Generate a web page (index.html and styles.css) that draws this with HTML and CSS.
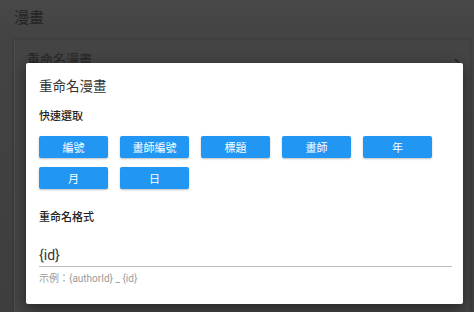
FILE: index.html
```html
<!DOCTYPE html>
<html lang="zh-Hant">
<head>
<meta charset="utf-8">
<title>重命名漫畫</title>
<link rel="stylesheet" href="styles.css">
</head>
<body>
<div class="page">
  <h1 class="page-title">漫畫</h1>
  <div class="card">
    <div class="card-row">
      <span>重命名漫畫</span>
      <svg class="chev" width="8" height="10" viewBox="0 0 8 10"><path d="M2 1 L6 5 L2 9" fill="none" stroke="#262626" stroke-width="1.6"/></svg>
    </div>
  </div>
</div>

<div class="dialog">
  <h2 class="dialog-title">重命名漫畫</h2>
  <div class="section-label">快速選取</div>
  <div class="chips">
    <button class="chip">編號</button>
    <button class="chip">畫師編號</button>
    <button class="chip">標題</button>
    <button class="chip">畫師</button>
    <button class="chip">年</button>
    <button class="chip">月</button>
    <button class="chip">日</button>
  </div>
  <div class="section-label format-label">重命名格式</div>
  <div class="field">{id}</div>
  <div class="hint">示例：{authorId} _ {id}</div>
</div>
</body>
</html>
```
FILE: styles.css
```css
* { box-sizing: border-box; }
html, body { margin: 0; padding: 0; }
body {
  width: 474px;
  height: 312px;
  overflow: hidden;
  background: #3b3b3b;
  font-family: Roboto, "Noto Sans CJK TC", sans-serif;
  position: relative;
}
.page {
  height: 312px;
  background: linear-gradient(#484848, #434343 40px, #3e3e3e 312px);
  padding: 9px 0 0 14px;
}
.page-title {
  margin: 0;
  font-size: 15px;
  line-height: 18px;
  font-weight: 400;
  color: #242424;
}
.card {
  margin-top: 13px;
  margin-right: 4px;
  height: 280px;
  background: #444;
  border-left: 1px solid #4d4d4d;
  box-shadow: 0 0 3px rgba(0,0,0,0.2);
}
.card-row {
  display: flex;
  align-items: center;
  justify-content: space-between;
  padding: 12px 9px 0 12px;
  font-size: 13px;
  line-height: 16px;
  color: #262626;
}
.chev { margin-top: 6px; }

.dialog {
  position: absolute;
  left: 26px;
  top: 63px;
  width: 437px;
  height: 241px;
  background: #fff;
  border-radius: 2px;
  box-shadow: 0 4px 14px rgba(0,0,0,0.45);
  padding: 14px 11px 0 13px;
}
.dialog-title {
  margin: 0;
  font-size: 13.5px;
  line-height: 18px;
  font-weight: 400;
  color: #333;
}
.section-label {
  margin-top: 15px;
  font-size: 11px;
  line-height: 14px;
  font-weight: 500;
  color: #222;
}
.chips {
  margin-top: 12px;
  display: grid;
  grid-template-columns: repeat(5, 69px);
  column-gap: 12px;
  row-gap: 9px;
}
.chip {
  height: 22px;
  border: none;
  border-radius: 2px;
  background: #2196f3;
  color: #fff;
  font-family: Roboto, "Noto Sans CJK TC", sans-serif;
  font-size: 11px;
  padding: 0;
  box-shadow: 0 1px 2px rgba(0,0,0,0.25);
}
.format-label { margin-top: 22px; }
.field {
  margin-top: 20px;
  font-size: 14px;
  line-height: 20px;
  padding-bottom: 1px;
  color: #333;
  border-bottom: 1px solid #bdbdbd;
}
.hint {
  margin-top: 5px;
  font-size: 10px;
  line-height: 13px;
  color: #9a9a9a;
}
```
